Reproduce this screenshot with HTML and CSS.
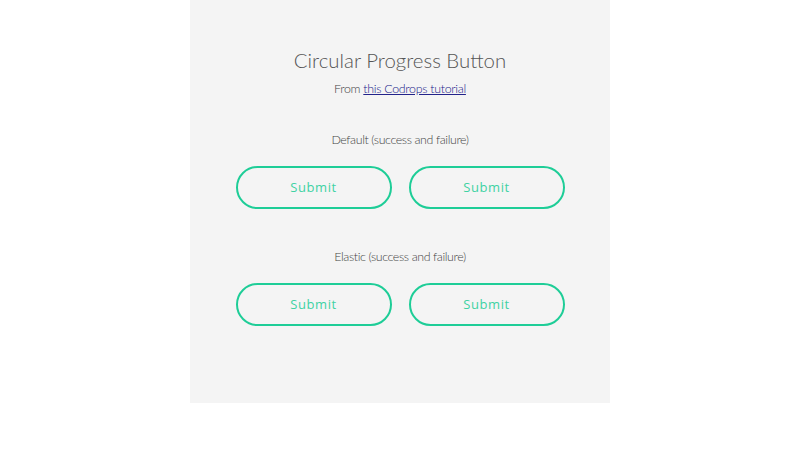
FILE: index.html
```html
<!DOCTYPE html>
<html lang="en">
<head>
  <meta charset="UTF-8" />
  <meta name="viewport" content="width=device-width, initial-scale=1.0" />
  <title>Circular Progress Button</title>
  <link rel="stylesheet" href="styles.css">
</head>
<body>
  <div class="container">
    <h1>Circular Progress Button</h1>
    <p class="intro">From <a href="#">this Codrops tutorial</a></p>

    <!-- Default -->
    <section class="demo">
      <p class="demo-label">Default (success and failure)</p>
      <div class="button-row">
        <button class="progress-button" type="button">Submit</button>
        <button class="progress-button" type="button">Submit</button>
      </div>
    </section>

    <!-- Elastic -->
    <section class="demo">
      <p class="demo-label">Elastic (success and failure)</p>
      <div class="button-row">
        <button class="progress-button" type="button">Submit</button>
        <button class="progress-button" type="button">Submit</button>
      </div>
    </section>
  </div>
</body>
</html>
```

FILE: styles.css
```css
body {
  margin: 0;
  background: #fff;
  font-family: Lato, 'Open Sans', sans-serif;
  color: #666;
}
.container {
  width: 420px;
  height: 403px;
  margin: 0 auto;
  padding-top: 47px;
  box-sizing: border-box;
  background: #f4f4f4;
  text-align: center;
}
h1 {
  margin: 0;
  font-size: 20.4px;
  line-height: 26px;
  font-weight: 300;
  color: #555;
}
.intro {
  margin: 7px 0 0;
  font-size: 12.4px;
  line-height: 18px;
  font-weight: 300;
  letter-spacing: -0.3px;
  color: #444;
}
.intro a {
  color: #22228a;
}
.demo {
  margin-top: 33px;
}
.demo + .demo {
  margin-top: 39px;
}
.demo-label {
  margin: 0 0 17px;
  font-size: 12.4px;
  line-height: 18px;
  font-weight: 300;
  letter-spacing: -0.4px;
  color: #444;
}
.button-row {
  display: flex;
  justify-content: center;
  gap: 17px;
}
.progress-button {
  width: 156px;
  height: 43px;
  padding: 0 0 1px;
  border: 2px solid #1ecd97;
  border-radius: 22px;
  background: transparent;
  color: #3fd2a3;
  font-family: 'Open Sans', sans-serif;
  font-size: 13px;
  letter-spacing: 0.6px;
  cursor: pointer;
}
```
